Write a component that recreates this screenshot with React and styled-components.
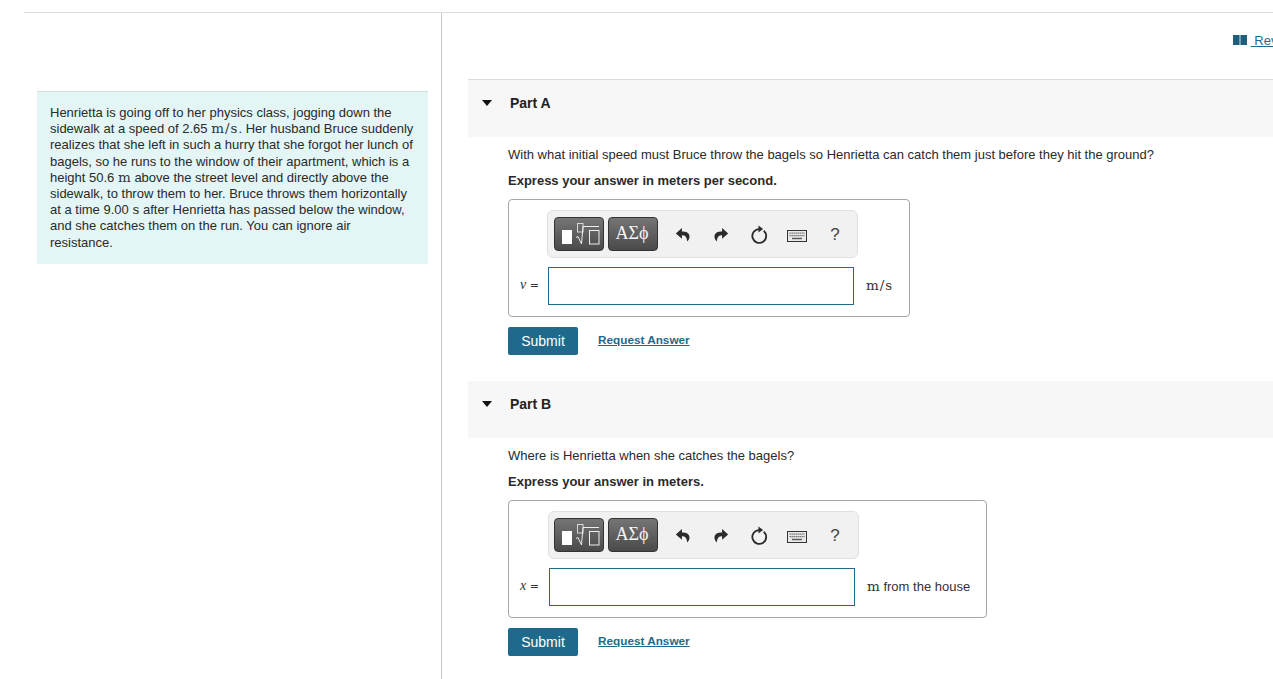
import React from 'react';
import styled, { createGlobalStyle } from 'styled-components';

const Global = createGlobalStyle`
  html, body { margin: 0; padding: 0; height: 679px; overflow: hidden; background: #fff; }
  body { font-family: "Liberation Sans", Arial, sans-serif; color: #222; }
`;
const Page = styled.div`
  margin: 12px 0 0 24px;
  height: 667px;
  border-top: 1px solid #dcdcdc;
  display: flex;
  overflow: hidden;
`;
const LeftColumn = styled.aside`
  flex: 0 0 418px;
  box-sizing: border-box;
  border-right: 1px solid #c8c8c8;
  padding: 78px 13px 0;
`;
const Intro = styled.div`
  width: 391px;
  box-sizing: border-box;
  height: 173px;
  background: #e3f5f5;
  border-top: 1px solid #d5dddd;
  padding: 13px 14px 0 13px;
  font-size: 13px;
  line-height: 16.2px;
  color: #2a2a2a;
`;
const M = styled.span`
  font-family: "DejaVu Serif", "Liberation Serif", serif;
  font-size: 13.5px;
  line-height: 0;
  letter-spacing: ${p => (p.$spaced ? '1px' : '0')};
  color: #333;
`;
const RightColumn = styled.main`
  flex: 0 0 860px;
  box-sizing: border-box;
  padding-left: 26px;
`;
const ReviewRow = styled.div`
  height: 66px;
  display: flex;
  justify-content: flex-end;
  padding: 20px 5px 0 0;
  box-sizing: border-box;
`;
const ReviewLink = styled.a`
  display: inline-flex;
  align-items: flex-start;
  height: 15px;
  color: #1f6a8c;
  font-size: 13px;
  line-height: 15px;
`;
const ReviewText = styled.span`
  text-decoration: underline;
  white-space: pre;
`;
const PartSection = styled.section`
  margin-bottom: 25px;
`;
const PartHeader = styled.div`
  height: 58px;
  box-sizing: border-box;
  background: #f7f7f7;
  background-clip: padding-box;
  border-top: 1px solid ${p => (p.$ruled ? '#dcdcdc' : 'transparent')};
  display: flex;
  align-items: flex-start;
  padding: 15px 0 0 14px;
`;
const Caret = styled.span`
  width: 0;
  height: 0;
  border-left: 5.5px solid transparent;
  border-right: 5.5px solid transparent;
  border-top: 6px solid #111;
  margin: 5px 17px 0 0;
`;
const PartTitle = styled.h3`
  margin: 0 0 0 1px;
  font-size: 14px;
  line-height: 16px;
  font-weight: 700;
  color: #222;
`;
const PartBody = styled.div`
  padding: 10px 0 0 40px;
`;
const Question = styled.p`
  margin: 0 0 10px;
  font-size: 13px;
  line-height: 16px;
  color: #2a2a2a;
`;
const Instruction = styled.p`
  margin: 0 0 10px;
  font-size: 13px;
  line-height: 16px;
  font-weight: 700;
  color: #2a2a2a;
`;
const AnswerBox = styled.div`
  width: ${p => p.$width}px;
  box-sizing: border-box;
  height: 118px;
  border: 1px solid #a6a6a6;
  border-radius: 4px;
  padding-top: 10px;
`;
const Toolbar = styled.div`
  width: 311px;
  height: 48px;
  box-sizing: border-box;
  margin-left: ${p => p.$shift}px;
  background: #f1f1f1;
  border: 1px solid #e0e0e0;
  border-radius: 6px;
  display: flex;
  align-items: center;
  padding-left: ${p => p.$pad}px;
`;
const ToolButton = styled.button`
  flex: 0 0 50px;
  height: 34px;
  box-sizing: border-box;
  margin-right: 4px;
  padding: 0 2px 2px 0;
  border: 1px solid #333;
  border-radius: 4px;
  background: linear-gradient(#757575, #4a4a4a);
  color: #f4f4f4;
  font-family: "Liberation Serif", serif;
  font-size: 18px;
  display: flex;
  align-items: center;
  justify-content: center;
`;
const TemplateButton = styled(ToolButton)`
  padding: 0;
`;
const IconGroup = styled.div`
  display: flex;
  align-items: center;
  margin-left: 2px;
`;
const IconSlot = styled.span`
  flex: 0 0 38px;
  display: flex;
  justify-content: center;
  align-items: center;
  margin-top: ${p => p.$drop}px;
  color: #444;
  font-size: 17px;
  font-family: "Liberation Sans", sans-serif;
`;
const InputRow = styled.div`
  margin-top: 9px;
  display: flex;
  align-items: center;
`;
const VarLabel = styled.span`
  width: ${p => p.$width}px;
  box-sizing: border-box;
  padding: 0 0 2px 11px;
  font-family: "DejaVu Serif", serif;
  font-size: 11px;
  color: #333;
  white-space: pre;
  i { font-family: "Liberation Serif", serif; font-size: 14px; }
`;
const AnswerInput = styled.div`
  width: 306px;
  height: 38px;
  box-sizing: border-box;
  border: 1px solid #1f6a8c;
  background: #fff;
`;
const Units = styled.span`
  margin: 0 0 2px 12px;
  font-size: 13px;
  color: #333;
`;
const Actions = styled.div`
  margin-top: 10px;
  display: flex;
  align-items: center;
`;
const SubmitButton = styled.button`
  width: 70px;
  height: 28px;
  padding: 0;
  border: 0;
  border-radius: 2px;
  background: #1f6a8c;
  color: #fff;
  font-family: "Liberation Sans", sans-serif;
  font-size: 14px;
`;
const RequestLink = styled.a`
  margin: 0 0 4px 20px;
  color: #1f6a8c;
  font-size: 11.75px;
  font-weight: 700;
  text-decoration: underline;
`;

const BookIcon = () => (
  <svg width="14" height="10" viewBox="0 0 14 10" style={{ marginTop: 2, marginRight: 4 }}>
    <path d="M0 0h6.600v10H0z" fill="#1f5f7e" />
    <path d="M7.400 0H14v10H7.400z" fill="#1f5f7e" />
  </svg>
);
const MathTemplateIcon = () => (
  <svg width="48" height="32" viewBox="0 0 48 32" fill="none">
    <rect x="7" y="12" width="10" height="14" fill="#fff" />
    <rect x="22.500" y="5.500" width="5.500" height="8.500" stroke="#d8d8d8" />
    <path d="M21 19.500l2-1 3.500 7.500L28 8.500h16" stroke="#eee" />
    <rect x="34.500" y="12.500" width="9.500" height="13.500" stroke="#eee" />
  </svg>
);
const arrowPath = 'M6.500 1L.8 6l5.700 5V7.700c2.600 0 4.400.8 5 5.800 1.400-1.500 2.300-3.200 2.100-4.900C13.300 5.500 10.500 4.300 6.500 4.300z';
const UndoIcon = () => (
  <svg width="16" height="16" viewBox="0 0 15 15">
    <path d={arrowPath} fill="#2b2b2b" />
  </svg>
);
const RedoIcon = () => (
  <svg width="16" height="16" viewBox="0 0 15 15" style={{ transform: 'scaleX(-1)' }}>
    <path d={arrowPath} fill="#2b2b2b" />
  </svg>
);
const ResetIcon = () => (
  <svg width="17" height="19" viewBox="0 0 17 19" fill="none">
    <path d="M12.700 5.700A6.900 6.900 0 1 1 8 4.100" stroke="#2b2b2b" strokeWidth="1.800" />
    <path d="M7.500 .6v7l4.600-3.500z" fill="#2b2b2b" />
  </svg>
);
const KeyboardIcon = () => (
  <svg width="20" height="12" viewBox="0 0 20 12" fill="none">
    <rect x=".5" y=".5" width="19" height="11" fill="#e8e8e8" stroke="#333" />
    <path d="M2.500 3.200h15M2.500 5.600h15" stroke="#666" strokeWidth="1.200" strokeDasharray="1.300 .7" />
    <path d="M5 8.500h10" stroke="#555" strokeWidth="1.400" />
  </svg>
);

const parts = [
  {
    name: 'Part A', ruled: true,
    question: 'With what initial speed must Bruce throw the bagels so Henrietta can catch them just before they hit the ground?',
    instruction: 'Express your answer in meters per second.',
    variable: 'v', width: 402, shift: 38, pad: 6, labelWidth: 39, units: <M $spaced>m/s</M>,
  },
  {
    name: 'Part B', ruled: false,
    question: 'Where is Henrietta when she catches the bagels?',
    instruction: 'Express your answer in meters.',
    variable: 'x', width: 479, shift: 39, pad: 5, labelWidth: 40, units: <><M>m</M> from the house</>,
  },
];

export default function App() {
  return (
    <>
      <Global />
      <Page>
        <LeftColumn>
          <Intro>
            Henrietta is going off to her physics class, jogging down the sidewalk at a speed of 2.65 <M $spaced>m/s</M>. Her husband Bruce suddenly realizes that she left in such a hurry that she forgot her lunch of bagels, so he runs to the window of their apartment, which is a height 50.6 <M>m</M> above the street level and directly above the sidewalk, to throw them to her. Bruce throws them horizontally at a time 9.00 <M>s</M> after Henrietta has passed below the window, and she catches them on the run. You can ignore air resistance.
          </Intro>
        </LeftColumn>
        <RightColumn>
          <ReviewRow>
            <ReviewLink><BookIcon /><ReviewText> Review</ReviewText></ReviewLink>
          </ReviewRow>
          {parts.map(p => (
            <PartSection key={p.name}>
              <PartHeader $ruled={p.ruled}>
                <Caret />
                <PartTitle>{p.name}</PartTitle>
              </PartHeader>
              <PartBody>
                <Question>{p.question}</Question>
                <Instruction>{p.instruction}</Instruction>
                <AnswerBox $width={p.width}>
                  <Toolbar $shift={p.shift} $pad={p.pad}>
                    <TemplateButton aria-label="templates"><MathTemplateIcon /></TemplateButton>
                    <ToolButton>ΑΣϕ</ToolButton>
                    <IconGroup>
                      <IconSlot $drop={1}><UndoIcon /></IconSlot>
                      <IconSlot $drop={1}><RedoIcon /></IconSlot>
                      <IconSlot $drop={0}><ResetIcon /></IconSlot>
                      <IconSlot $drop={3}><KeyboardIcon /></IconSlot>
                      <IconSlot $drop={1}>?</IconSlot>
                    </IconGroup>
                  </Toolbar>
                  <InputRow>
                    <VarLabel $width={p.labelWidth}><i>{p.variable}</i> =</VarLabel>
                    <AnswerInput />
                    <Units>{p.units}</Units>
                  </InputRow>
                </AnswerBox>
                <Actions>
                  <SubmitButton>Submit</SubmitButton>
                  <RequestLink>Request Answer</RequestLink>
                </Actions>
              </PartBody>
            </PartSection>
          ))}
        </RightColumn>
      </Page>
    </>
  );
}
